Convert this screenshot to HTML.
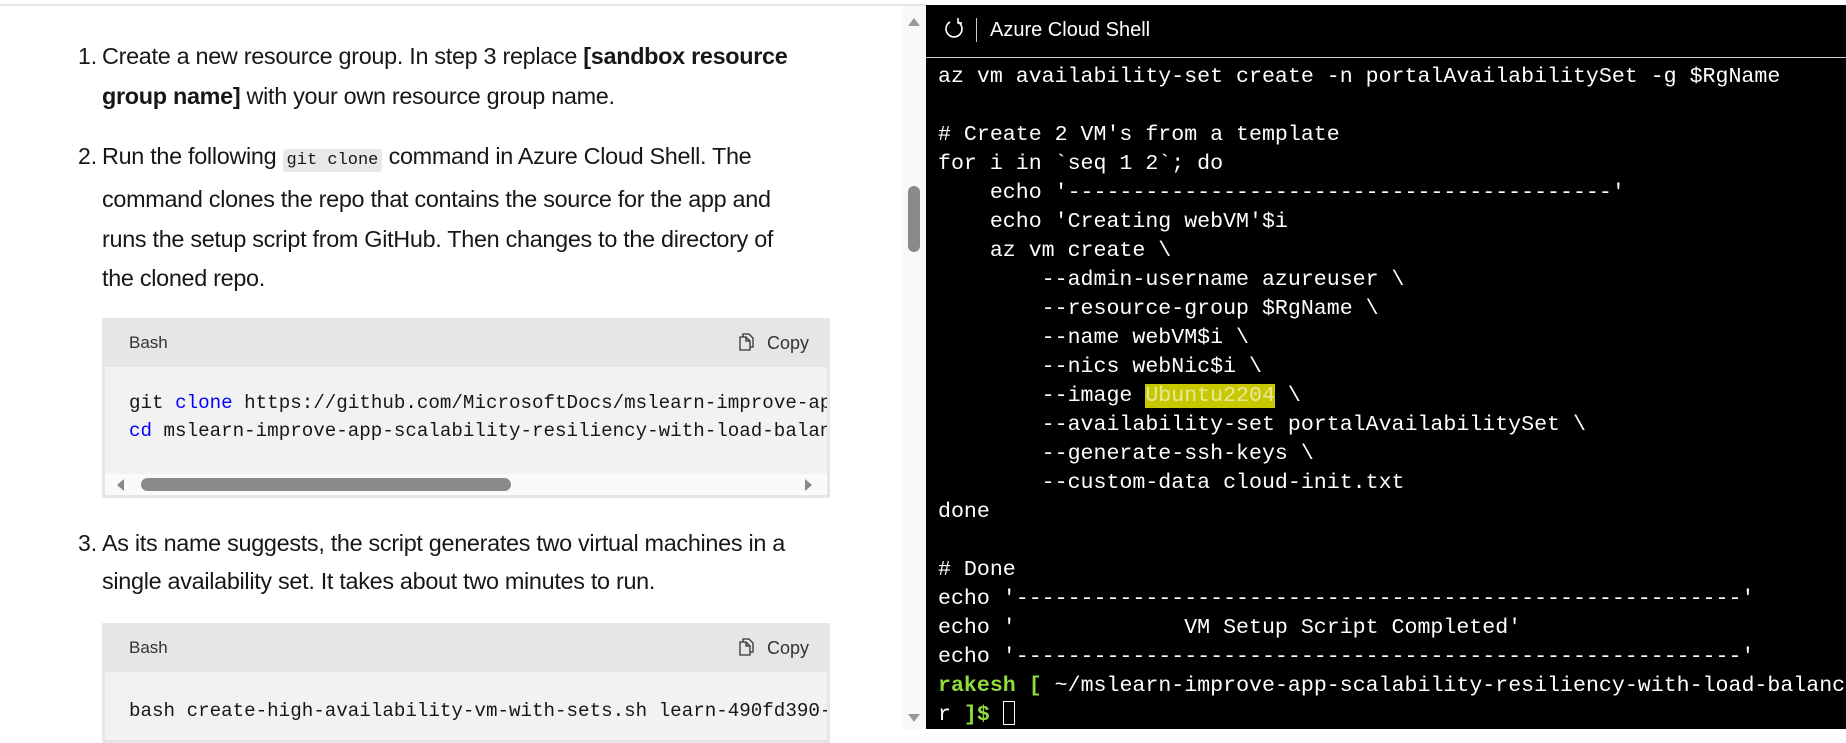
<!DOCTYPE html>
<html><head><meta charset="utf-8"><style>
*{margin:0;padding:0;box-sizing:border-box}
body{width:1846px;height:729px;overflow:hidden;background:#fff;position:relative;font-family:"Liberation Sans",sans-serif;color:#171717}
.topline{position:absolute;left:0;top:4px;width:926px;height:2px;background:#e6e6e6}
.t{position:absolute;font-size:23.4px;white-space:nowrap;letter-spacing:-0.3px}
.num{position:absolute;font-size:23px}
.ic{background:#e8e8e8;font-family:"Liberation Mono",monospace;font-size:17px;padding:2px 4px;border-radius:3px;letter-spacing:0}
.box{position:absolute;left:102px;width:728px;background:#f2f2f2;border:3px solid #e6e6e6;border-top:0}
.hdr{height:49px;background:#e6e6e6;position:relative;font-size:17px;color:#333}
.hdr .b{position:absolute;left:24px;top:15px}
.hdr .c{position:absolute;right:18px;top:15px;font-size:18px}
.hdr svg{position:absolute;right:72px;top:15px}
.code{font-family:"Liberation Mono",monospace;font-size:19.2px;white-space:pre;overflow:hidden;color:#171717}
.kw{color:#0101fd}
.sb{position:absolute;left:903px;top:6px;width:23px;height:723px;background:#f8f8f8}
.term{position:absolute;left:926px;top:5px;width:920px;height:724px;background:#000;overflow:hidden}
.th{height:53px;border-bottom:1px solid #d0d0d0;color:#fff;position:relative}
.tl{position:absolute;left:12px;font-family:"Liberation Mono",monospace;font-size:21.6px;line-height:29px;color:#fff;white-space:pre}
.g{color:#8fdc3a;font-weight:bold}
.hl{background:#c8c800;color:#e8e8a0}
</style></head><body>
<div class="topline"></div>

<div class="num" style="left:78px;top:43px">1.</div>
<div class="t" style="left:102px;top:43px">Create a new resource group. In step 3 replace <b>[sandbox resource</b></div>
<div class="t" style="left:102px;top:83px"><b>group name]</b> with your own resource group name.</div>

<div class="num" style="left:78px;top:143px">2.</div>
<div class="t" style="left:102px;top:143px">Run the following <span class="ic">git clone</span> command in Azure Cloud Shell. The</div>
<div class="t" style="left:102px;top:186px">command clones the repo that contains the source for the app and</div>
<div class="t" style="left:102px;top:226px">runs the setup script from GitHub. Then changes to the directory of</div>
<div class="t" style="left:102px;top:265px">the cloned repo.</div>

<div class="box" style="top:318px;height:180px">
 <div class="hdr"><span class="b">Bash</span>
 <svg width="16" height="18" viewBox="0 0 16 18" fill="none" stroke="#333" stroke-width="1.3"><path d="M4 4V1h6l4 4v9h-3"/><path d="M1 4h6l4 4v9H1z"/><path d="M7 4v4h4"/></svg>
 <span class="c">Copy</span></div>
 <div class="code" style="position:absolute;left:24px;top:71px;width:698px;line-height:28px">git <span class="kw">clone</span> https://github.com/MicrosoftDocs/mslearn-improve-app-scalability
<span class="kw">cd</span> mslearn-improve-app-scalability-resiliency-with-load-balancer</div>
 <div style="position:absolute;left:0;top:156px;width:722px;height:21px;background:#fafafa">
  <div style="position:absolute;left:12px;top:5px;width:0;height:0;border-top:6px solid transparent;border-bottom:6px solid transparent;border-right:7px solid #888"></div>
  <div style="position:absolute;left:36px;top:4px;width:370px;height:13px;border-radius:7px;background:#8a8a8a"></div>
  <div style="position:absolute;left:700px;top:5px;width:0;height:0;border-top:6px solid transparent;border-bottom:6px solid transparent;border-left:7px solid #888"></div>
 </div>
</div>

<div class="num" style="left:78px;top:530px">3.</div>
<div class="t" style="left:102px;top:530px">As its name suggests, the script generates two virtual machines in a</div>
<div class="t" style="left:102px;top:568px">single availability set. It takes about two minutes to run.</div>

<div class="box" style="top:623px;height:120px">
 <div class="hdr"><span class="b">Bash</span>
 <svg width="16" height="18" viewBox="0 0 16 18" fill="none" stroke="#333" stroke-width="1.3"><path d="M4 4V1h6l4 4v9h-3"/><path d="M1 4h6l4 4v9H1z"/><path d="M7 4v4h4"/></svg>
 <span class="c">Copy</span></div>
 <div class="code" style="position:absolute;left:24px;top:77px;width:698px">bash create-high-availability-vm-with-sets.sh learn-490fd390-</div>
</div>

<div class="sb">
 <div style="position:absolute;left:5px;top:12px;border-left:6px solid transparent;border-right:6px solid transparent;border-bottom:8px solid #999"></div>
 <div style="position:absolute;left:5px;top:180px;width:12px;height:66px;border-radius:6px;background:#8a8a8a"></div>
 <div style="position:absolute;left:5px;top:708px;border-left:6px solid transparent;border-right:6px solid transparent;border-top:8px solid #999"></div>
</div>

<div class="term">
 <div class="th">
  <svg style="position:absolute;left:17px;top:12px" width="22" height="24" viewBox="0 0 22 24" fill="none" stroke="#fff" stroke-width="1.6"><path d="M7 5A8 8 0 1 0 15 5"/><path d="M15 1v5h4"/></svg>
  <div style="position:absolute;left:50px;top:13px;width:1px;height:24px;background:#ccc"></div>
  <div style="position:absolute;left:64px;top:14px;font-size:20px">Azure Cloud Shell</div>
 </div>
 <div class="tl" style="top:58px">az vm availability-set create -n portalAvailabilitySet -g $RgName

# Create 2 VM's from a template
for i in `seq 1 2`; do
    echo '------------------------------------------'
    echo 'Creating webVM'$i
    az vm create \
        --admin-username azureuser \
        --resource-group $RgName \
        --name webVM$i \
        --nics webNic$i \
        --image <span class="hl">Ubuntu2204</span> \
        --availability-set portalAvailabilitySet \
        --generate-ssh-keys \
        --custom-data cloud-init.txt
done

# Done
echo '--------------------------------------------------------'
echo '             VM Setup Script Completed'
echo '--------------------------------------------------------'
<span class="g">rakesh</span> <span class="g">[</span> ~/mslearn-improve-app-scalability-resiliency-with-load-balancer
r <span class="g">]$</span> <span style="display:inline-block;width:12px;height:24px;border:1px solid #fff;vertical-align:-5px"></span></div>
</div>
</body></html>
